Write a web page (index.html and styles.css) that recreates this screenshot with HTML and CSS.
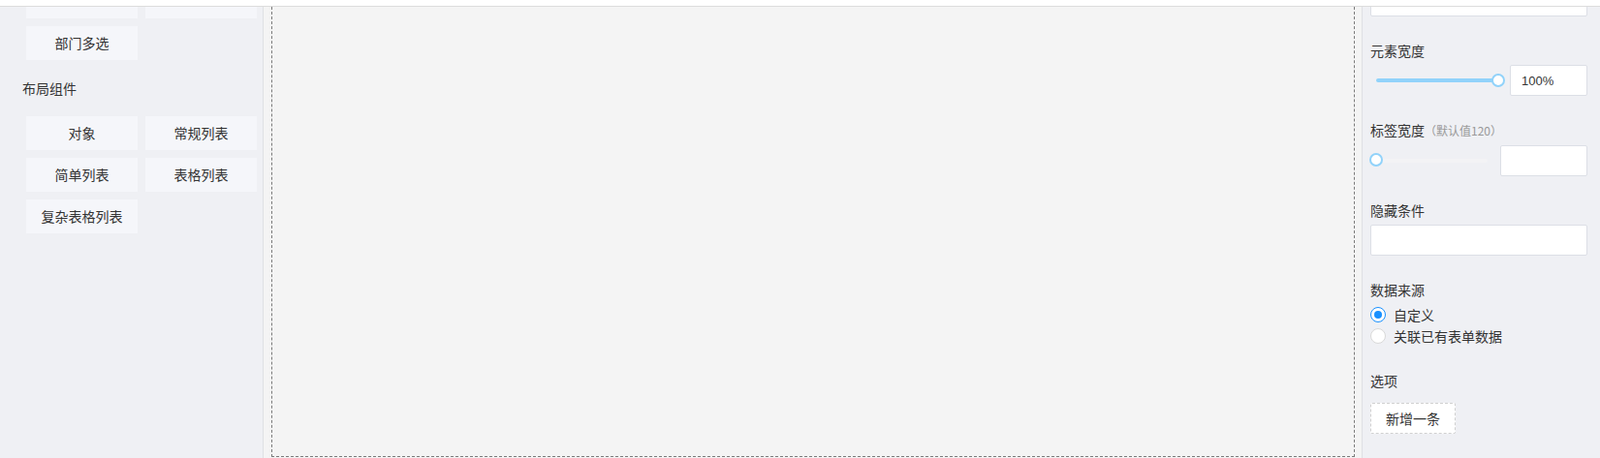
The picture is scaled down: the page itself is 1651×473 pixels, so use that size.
FILE: index.html
```html
<!DOCTYPE html>
<html lang="zh-CN">
<head>
<meta charset="utf-8">
<title>表单设计器</title>
<link rel="stylesheet" href="styles.css">
</head>
<body>
<div class="app">
  <header class="topbar"></header>
  <main class="workspace">
    <aside class="palette">
      <div class="palette-inner">
        <div class="comp-grid">
          <div class="comp-btn"></div>
          <div class="comp-btn"></div>
          <div class="comp-btn">部门多选</div>
        </div>
        <div class="group-title">布局组件</div>
        <div class="comp-grid">
          <div class="comp-btn">对象</div>
          <div class="comp-btn">常规列表</div>
          <div class="comp-btn">简单列表</div>
          <div class="comp-btn">表格列表</div>
          <div class="comp-btn">复杂表格列表</div>
        </div>
      </div>
    </aside>
    <section class="canvas">
      <div class="drop-zone"></div>
    </section>
    <aside class="props">
      <div class="props-inner">
        <div class="field field-first">
          <input class="text-input" type="text">
        </div>
        <div class="field">
          <div class="field-label">元素宽度</div>
          <div class="slider-row">
            <div class="slider slider-wide">
              <div class="track"><div class="fill fill-full"></div></div>
              <div class="thumb thumb-end"></div>
            </div>
            <input class="text-input num-input num-80" type="text" value="100%">
          </div>
        </div>
        <div class="field">
          <div class="field-label">标签宽度<span class="hint">（默认值120）</span></div>
          <div class="slider-row">
            <div class="slider slider-narrow">
              <div class="track track-empty"></div>
              <div class="thumb thumb-start"></div>
            </div>
            <input class="text-input num-input num-90" type="text">
          </div>
        </div>
        <div class="field">
          <div class="field-label">隐藏条件</div>
          <input class="text-input" type="text">
        </div>
        <div class="field">
          <div class="field-label">数据来源</div>
          <div class="radio-group">
            <label class="radio"><span class="radio-dot checked"></span><span>自定义</span></label>
            <label class="radio"><span class="radio-dot"></span><span>关联已有表单数据</span></label>
          </div>
        </div>
        <div class="field">
          <div class="field-label">选项</div>
          <button class="add-btn" type="button">新增一条</button>
        </div>
      </div>
    </aside>
  </main>
</div>
</body>
</html>
```
FILE: styles.css
```css
* { box-sizing: border-box; }
html, body { margin: 0; padding: 0; height: 100%; }
body {
  font-family: "Noto Sans CJK SC", "Liberation Sans", sans-serif;
  font-size: 14px;
  color: #333;
  background: #fff;
  overflow: hidden;
}
.app { display: flex; flex-direction: column; height: 100vh; }
.topbar {
  height: 7px;
  flex: none;
  background: #fff;
  border-bottom: 1px solid #dcdcdc;
}
.workspace { flex: 1; display: flex; min-height: 0; }

/* left palette */
.palette {
  width: 272px;
  flex: none;
  background: #eff0f4;
  border-right: 1px solid #dfe0e4;
  overflow: hidden;
}
.palette-inner { margin-top: -23px; }
.comp-grid {
  display: grid;
  grid-template-columns: 115px 115px;
  gap: 8px;
  margin-left: 27px;
}
.comp-btn {
  height: 35px;
  line-height: 35px;
  text-align: center;
  background: #f5f6fa;
  color: #333;
  font-size: 14px;
}
.group-title {
  margin: 18px 0 18px 23px;
  line-height: 22px;
  font-size: 14px;
  color: #333;
}

/* canvas */
.canvas {
  flex: 1;
  background: #f4f4f4;
  padding: 0 7px 1px 8px;
  display: flex;
}
.drop-zone {
  flex: 1;
  border: 1px dashed #7a7a7a;
  border-top: none;
}

/* property panel */
.props {
  width: 246px;
  flex: none;
  background: #eff0f4;
  border-left: 1px solid #dfe0e4;
  overflow: hidden;
  padding: 0 13px 0 8px;
}
.props-inner { margin-top: -22px; }
.field { margin-top: 24px; }
.field.field-first { margin-top: 0; }
.field-label {
  line-height: 22px;
  margin-bottom: 4px;
  color: #333;
}
.hint { font-size: 12px; color: #999; }
.text-input {
  display: block;
  width: 100%;
  height: 32px;
  border: 1px solid #dcdfe6;
  border-radius: 2px;
  background: #fff;
  padding: 0 11px;
  font-family: "Liberation Sans", sans-serif;
  font-size: 13px;
  color: #333;
  outline: none;
}
.slider-row { display: flex; align-items: center; }
.num-input { flex: none; }
.num-80 { width: 80px; }
.num-90 { width: 90px; }
.slider {
  position: relative;
  height: 32px;
  padding: 0 6px;
  display: flex;
  align-items: center;
}
.slider-wide { width: 138px; margin-right: 6px; }
.slider-narrow { width: 127px; margin-right: 7px; }
.track {
  flex: 1;
  height: 4px;
  border-radius: 2px;
  background: #f3f3f5;
}
.fill { height: 100%; border-radius: 2px; background: #91d2fa; }
.fill-full { width: 100%; }
.thumb {
  position: absolute;
  top: 9px;
  width: 14px;
  height: 14px;
  border-radius: 50%;
  background: #fff;
  border: 2px solid #91d2fa;
}
.thumb-end { right: -1px; }
.thumb-start { left: -1px; top: 8px; }

.radio-group { margin-top: 3px; }
.radio {
  display: flex;
  align-items: center;
  height: 22px;
  gap: 8px;
  color: #333;
}
.radio-dot {
  width: 16px;
  height: 16px;
  border-radius: 50%;
  border: 1px solid #d9d9d9;
  background: #fff;
  flex: none;
  position: relative;
}
.radio-dot.checked { border-color: #1890ff; }
.radio-dot.checked::after {
  content: "";
  position: absolute;
  left: 3px;
  top: 3px;
  width: 8px;
  height: 8px;
  border-radius: 50%;
  background: #1890ff;
}
.add-btn {
  display: block;
  margin-top: 12px;
  width: 88px;
  height: 32px;
  background: #fff;
  border: 1px dashed #d0d0d0;
  border-radius: 2px;
  font-family: "Noto Sans CJK SC", sans-serif;
  font-size: 14px;
  color: #333;
  padding: 0;
}
```
